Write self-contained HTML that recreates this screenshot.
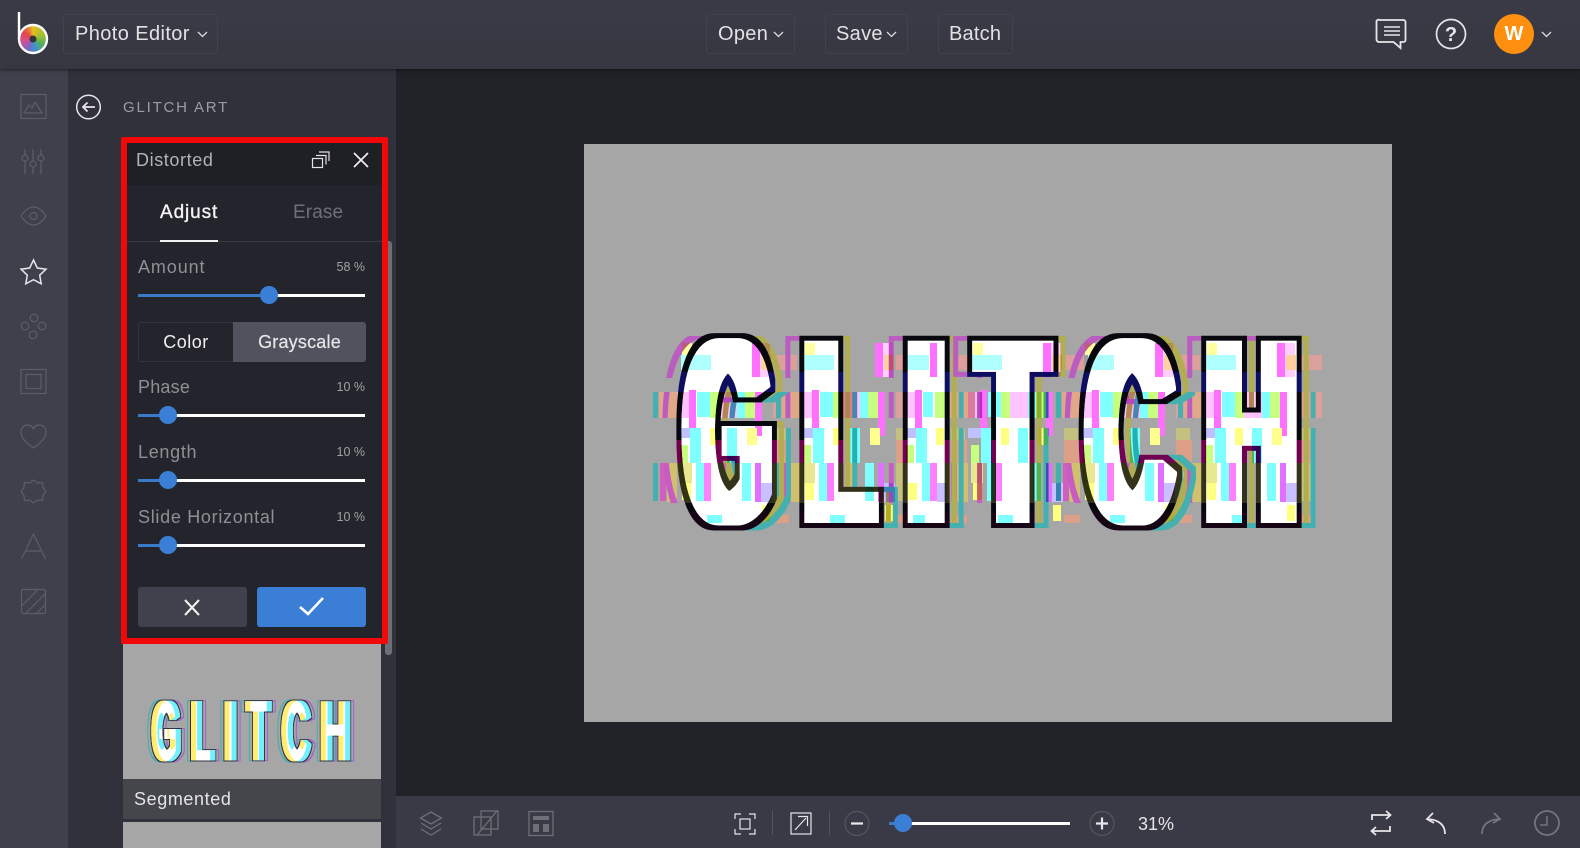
<!DOCTYPE html>
<html><head><meta charset="utf-8"><title>Photo Editor</title>
<style>
html,body{margin:0;padding:0;background:#202227;}
body{position:relative;width:1580px;height:848px;overflow:hidden;font-family:"Liberation Sans",sans-serif;}
.a{position:absolute;}
.t{position:absolute;white-space:nowrap;line-height:24px;height:24px;letter-spacing:.7px;}
.btn{position:absolute;top:14px;height:38px;border:1px solid #41424c;border-radius:3px;box-sizing:content-box;}
.track{position:absolute;left:138px;width:227px;height:3px;background:#fff;}
.fill{position:absolute;left:0;top:0;height:3px;background:#3a7bc8;}
.knob{position:absolute;width:18px;height:18px;border-radius:50%;background:#3a7fd5;top:-8px;}
.pc{font-size:12.5px;color:#a0a1a6;letter-spacing:0;right:1215px;}
</style></head><body>
<div class="a" style="left:0;top:0;width:1580px;height:69px;background:linear-gradient(#3a3b46,#363741);z-index:3;box-shadow:0 1px 3px rgba(0,0,0,.5)"></div>
<div class="a" style="left:0;top:69px;width:68px;height:779px;background:#3e404b"></div>
<div class="a" style="left:68px;top:69px;width:328px;height:779px;background:#30313b"></div>
<div class="a" style="left:396px;top:69px;width:1184px;height:727px;background:#202227"></div>
<div class="a" style="left:396px;top:796px;width:1184px;height:52px;background:#393a45"></div>
<div class="a" style="left:584px;top:144px;width:808px;height:578px;background:#a6a6a6"></div>

<div class="a" style="left:123px;top:644px;width:258px;height:136px;background:#a6a6a6"></div>
<div class="a" style="left:123px;top:779px;width:258px;height:40px;background:#45464c"></div>
<div class="a" style="left:123px;top:822px;width:258px;height:26px;background:#a6a6a6"></div>
<div class="t" style="left:134px;top:787px;font-size:18px;color:#e4e4e6;letter-spacing:.6px">Segmented</div>

<div class="a" style="left:385px;top:241px;width:7px;height:414px;background:#6d6e76;border-radius:3px"></div>

<div class="a" style="left:127px;top:143px;width:255px;height:495px;background:#24252c"></div>
<div class="a" style="left:127px;top:143px;width:255px;height:42px;background:#1f2025"></div>
<div class="a" style="left:127px;top:241px;width:255px;height:1px;background:#3a3b44"></div>
<div class="a" style="left:160px;top:240px;width:58px;height:2px;background:#f0f0f0"></div>
<div class="a" style="left:121px;top:137px;width:267px;height:507px;border:6px solid #f20808;box-sizing:border-box;border-radius:2px;z-index:2"></div>

<!-- header text -->
<div class="btn" style="left:63px;width:153px;z-index:4"></div>
<div class="t" style="left:75px;top:22px;font-size:20px;color:#e2e2e5;z-index:4;letter-spacing:.4px">Photo Editor</div>
<div class="btn" style="left:706px;width:87px;z-index:4"></div>
<div class="t" style="left:718px;top:22px;font-size:20px;color:#e2e2e5;z-index:4;letter-spacing:.3px">Open</div>
<div class="btn" style="left:825px;width:81px;z-index:4"></div>
<div class="t" style="left:836px;top:22px;font-size:20px;color:#e2e2e5;z-index:4;letter-spacing:.3px">Save</div>
<div class="btn" style="left:938px;width:73px;z-index:4"></div>
<div class="t" style="left:949px;top:22px;font-size:20px;color:#e2e2e5;z-index:4;letter-spacing:.2px">Batch</div>
<div class="a" style="left:1494px;top:14px;width:40px;height:40px;border-radius:50%;background:#ff900f;z-index:4;color:#fff;font-weight:bold;font-size:20px;line-height:41px;text-align:center">W</div>

<!-- logo wheel -->
<div class="a" style="left:20px;top:26px;width:26px;height:26px;border-radius:50%;background:conic-gradient(#e8c020 0deg,#9cc030 70deg,#50b060 120deg,#3f90d0 170deg,#8a5fc0 215deg,#d84f90 260deg,#e04848 310deg,#e89030 345deg,#e8c020 360deg);z-index:4"></div>

<!-- panel text -->
<div class="t" style="left:123px;top:96px;font-size:15px;color:#9c9da4;letter-spacing:1.8px">GLITCH ART</div>
<div class="t" style="left:136px;top:148px;font-size:18px;color:#b2b3b7;z-index:3;letter-spacing:.6px">Distorted</div>
<div class="t" style="left:160px;top:201px;font-size:19px;color:#f4f4f4;letter-spacing:.9px;-webkit-text-stroke:.35px #f4f4f4">Adjust</div>
<div class="t" style="left:293px;top:201px;font-size:19px;color:#6e6f78;letter-spacing:.1px">Erase</div>

<div class="t" style="left:138px;top:255px;font-size:18px;color:#8f9096;letter-spacing:.9px">Amount</div>
<div class="t pc" style="top:255px">58 %</div>
<div class="track" style="top:294px"><div class="fill" style="width:131px"></div><div class="knob" style="left:122px"></div></div>

<div class="a" style="left:138px;top:322px;width:95px;height:40px;border:1px solid #33343d;border-right:0;box-sizing:border-box;border-radius:3px 0 0 3px;color:#f0f0f0;font-size:18px;line-height:38px;text-align:center;letter-spacing:.5px">Color</div>
<div class="a" style="left:233px;top:322px;width:133px;height:40px;background:#50525e;border-radius:0 3px 3px 0;color:#e6e6e8;font-size:18px;line-height:40px;text-align:center;letter-spacing:.2px;-webkit-text-stroke:.2px #e6e6e8">Grayscale</div>

<div class="t" style="left:138px;top:375px;font-size:18px;color:#8f9096;letter-spacing:.2px">Phase</div>
<div class="t pc" style="top:375px">10 %</div>
<div class="track" style="top:414px"><div class="fill" style="width:30px"></div><div class="knob" style="left:21px"></div></div>

<div class="t" style="left:138px;top:440px;font-size:18px;color:#8f9096">Length</div>
<div class="t pc" style="top:440px">10 %</div>
<div class="track" style="top:479px"><div class="fill" style="width:30px"></div><div class="knob" style="left:21px"></div></div>

<div class="t" style="left:138px;top:505px;font-size:18px;color:#8f9096">Slide Horizontal</div>
<div class="t pc" style="top:505px">10 %</div>
<div class="track" style="top:544px"><div class="fill" style="width:30px"></div><div class="knob" style="left:21px"></div></div>

<div class="a" style="left:138px;top:587px;width:109px;height:40px;background:#3f414c;border-radius:3px"></div>
<div class="a" style="left:257px;top:587px;width:109px;height:40px;background:#3a7fd5;border-radius:3px"></div>

<!-- bottom slider -->
<div class="a" style="left:889px;top:822px;width:181px;height:3px;background:#fff"></div>
<div class="a" style="left:889px;top:822px;width:13px;height:3px;background:#3a7bc8"></div>
<div class="a" style="left:894px;top:814px;width:18px;height:18px;border-radius:50%;background:#3a7fd5"></div>
<div class="t" style="left:1138px;top:812px;font-size:18px;color:#e6e6e8;letter-spacing:0">31%</div>

<!-- icons + artwork -->
<svg class="a" style="left:0;top:0;z-index:5;pointer-events:none" width="1580" height="848" viewBox="0 0 1580 848" fill="none">
<defs>
<filter id="gl" filterUnits="userSpaceOnUse" x="620" y="310" width="740" height="240" primitiveUnits="userSpaceOnUse" color-interpolation-filters="sRGB">
  <feMorphology in="SourceAlpha" operator="dilate" radius="9 1" result="core"/>
  <feMorphology in="SourceAlpha" operator="dilate" radius="14 6" result="outer"/>
  <feComposite in="outer" in2="core" operator="out" result="ring"/>
  <feOffset in="ring" dx="-14" dy="0" result="rm"/>
  <feOffset in="ring" dx="14" dy="0" result="rt"/>
  <feOffset in="ring" dx="7" dy="0" result="ry"/>
  <feFlood x="620" y="336" width="740" height="42" flood-color="#bb5cc0" result="m1"/>
  <feFlood x="620" y="392" width="740" height="26" flood-color="#bb5cc0" result="m2"/>
  <feFlood x="620" y="463" width="740" height="40" flood-color="#c95cc0" result="m3"/>
  <feMerge result="mb"><feMergeNode in="m1"/><feMergeNode in="m2"/><feMergeNode in="m3"/></feMerge>
  <feComposite in="mb" in2="rm" operator="in" result="mg"/>
  <feFlood x="620" y="392" width="740" height="26" flood-color="#45b0b0" result="t1"/>
  <feFlood x="620" y="428" width="740" height="105" flood-color="#45b0b0" result="t2"/>
  <feMerge result="tb"><feMergeNode in="t1"/><feMergeNode in="t2"/></feMerge>
  <feComposite in="tb" in2="rt" operator="in" result="tl"/>
  <feFlood x="620" y="336" width="740" height="200" flood-color="#b0ae50" result="y1"/>
  <feComposite in="y1" in2="ry" operator="in" result="yl"/>
  <feFlood flood-color="#08080f" result="bk0"/>
  <feFlood x="620" y="372" width="740" height="20" flood-color="#0e0e60" result="bk1"/>
  <feFlood x="620" y="440" width="740" height="23" flood-color="#700050" result="bk2"/>
  <feFlood x="620" y="463" width="740" height="40" flood-color="#33331c" result="bk3"/>
  <feFlood x="620" y="512" width="740" height="22" flood-color="#150515" result="bk4"/>
  <feMerge result="bk"><feMergeNode in="bk0"/><feMergeNode in="bk1"/><feMergeNode in="bk2"/><feMergeNode in="bk3"/><feMergeNode in="bk4"/></feMerge>
  <feComposite in="bk" in2="ring" operator="in" result="bl"/>
  <feFlood flood-color="#ffffff" result="wh"/>
  <feComposite in="wh" in2="core" operator="in" result="wl"/>
  <feMerge>
    <feMergeNode in="yl"/><feMergeNode in="mg"/><feMergeNode in="tl"/><feMergeNode in="bl"/><feMergeNode in="wl"/>
  </feMerge>
</filter>
<filter id="gs" filterUnits="userSpaceOnUse" x="620" y="310" width="740" height="240" primitiveUnits="userSpaceOnUse" color-interpolation-filters="sRGB">
  <feMorphology in="SourceAlpha" operator="dilate" radius="9 1" result="core"/>
  <feMorphology in="SourceAlpha" operator="dilate" radius="12 4" result="outer"/>
  <feComposite in="outer" in2="core" operator="out" result="ring"/>
  <feOffset in="ring" dx="-9" result="r1"/>
  <feOffset in="ring" dx="9" result="r2"/>
  <feOffset in="core" dx="15" result="c1"/>
  <feOffset in="core" dx="-15" result="c2"/>
  <feFlood flood-color="#40b0b0" result="f1"/><feComposite in="f1" in2="r1" operator="in" result="l1"/>
  <feFlood flood-color="#a060d0" result="f2"/><feComposite in="f2" in2="r2" operator="in" result="l2"/>
  <feFlood flood-color="#33333f" result="f3"/><feComposite in="f3" in2="ring" operator="in" result="l3"/>
  <feFlood flood-color="#ffffff" result="f4"/><feComposite in="f4" in2="core" operator="in" result="l4"/>
  <feFlood flood-color="#ffee70" result="f5"/><feComposite in="f5" in2="core" operator="in" result="l5a"/><feComposite in="l5a" in2="c1" operator="out" result="l5"/>
  <feFlood flood-color="#70f0ff" result="f6"/><feComposite in="f6" in2="core" operator="in" result="l6a"/><feComposite in="l6a" in2="c2" operator="out" result="l6"/>
  <feMerge><feMergeNode in="l1"/><feMergeNode in="l2"/><feMergeNode in="l3"/><feMergeNode in="l4"/><feMergeNode in="l5"/><feMergeNode in="l6"/></feMerge>
</filter>
<g id="back">
  <rect x="96" y="355" width="24" height="15" fill="#dca09c"/>
  <rect x="-18" y="392" width="18" height="26" fill="#e0a888"/>
  <rect x="-24" y="392" width="5" height="26" fill="#45b0b0"/>
  <rect x="96" y="392" width="24" height="26" fill="#dca09c"/>
  <rect x="96" y="440" width="16" height="23" fill="#dca088"/>
  <rect x="96" y="428" width="14" height="12" fill="#c4c080"/>
  <rect x="-24" y="463" width="5" height="38" fill="#45b0b0"/>
  <rect x="-17" y="463" width="6" height="38" fill="#d060c0"/>
  <rect x="-10" y="463" width="10" height="39" fill="#d0c070"/>
  <rect x="96" y="463" width="14" height="38" fill="#c8c080"/>
  <rect x="96" y="515" width="16" height="8" fill="#dca088"/>
</g>
<g id="front" style="mix-blend-mode:multiply">
  <rect x="0" y="392" width="12" height="26" fill="#ffc4ff"/>
  <rect x="12" y="390" width="7" height="47" fill="#ff70ff"/>
  <rect x="20" y="392" width="13" height="25" fill="#80ffff"/>
  <rect x="33" y="392" width="9" height="26" fill="#c8ff80"/>
  <rect x="42" y="392" width="18" height="26" fill="#ffc4ff"/>
  <rect x="60" y="392" width="8" height="26" fill="#80ffff"/>
  <rect x="78" y="392" width="7" height="44" fill="#ff70ff"/>
  <rect x="68" y="392" width="10" height="26" fill="#c8ff80"/>
  <rect x="75" y="343" width="8" height="34" fill="#ff70ff"/>
  <rect x="83" y="343" width="10" height="34" fill="#ffd0ff"/>
  <rect x="5" y="343" width="10" height="12" fill="#ffffa0"/>
  <rect x="4" y="355" width="30" height="15" fill="#b0ffff"/>
  <rect x="84" y="355" width="10" height="15" fill="#ffd0a0"/>
  <rect x="0" y="428" width="13" height="10" fill="#c0c0ff"/>
  <rect x="13" y="428" width="11" height="35" fill="#80ffff"/>
  <rect x="33" y="428" width="8" height="17" fill="#ffff80"/>
  <rect x="3" y="445" width="8" height="18" fill="#c8ff80"/>
  <rect x="70" y="428" width="10" height="17" fill="#ffff90"/>
  <rect x="50" y="428" width="10" height="35" fill="#80ffff"/>
  <rect x="3" y="463" width="12" height="20" fill="#e8e890"/>
  <rect x="5" y="483" width="9" height="17" fill="#ffff80"/>
  <rect x="19" y="463" width="8" height="38" fill="#80ffff"/>
  <rect x="27" y="463" width="7" height="38" fill="#ff80ff"/>
  <rect x="78" y="463" width="6" height="39" fill="#e070ff"/>
  <rect x="84" y="483" width="11" height="19" fill="#c8c0ff"/>
  <rect x="65" y="463" width="9" height="38" fill="#80ffff"/>
  <rect x="30" y="515" width="15" height="8" fill="#80ffff"/>
  <rect x="85" y="505" width="8" height="16" fill="#ffff80"/>
</g>
<g id="frontI" style="mix-blend-mode:multiply">
  <rect x="0" y="392" width="12" height="26" fill="#ffc4ff"/>
  <rect x="12" y="390" width="7" height="47" fill="#ff70ff"/>
  <rect x="20" y="392" width="10" height="25" fill="#80ffff"/>
  <rect x="32" y="392" width="13" height="26" fill="#c8ff80"/>
  <rect x="27" y="343" width="7" height="34" fill="#ff70ff"/>
  <rect x="4" y="355" width="22" height="15" fill="#b0ffff"/>
  <rect x="0" y="428" width="13" height="10" fill="#c0c0ff"/>
  <rect x="13" y="428" width="11" height="35" fill="#80ffff"/>
  <rect x="33" y="428" width="8" height="17" fill="#ffff80"/>
  <rect x="3" y="445" width="8" height="18" fill="#c8ff80"/>
  <rect x="5" y="483" width="9" height="17" fill="#ffff80"/>
  <rect x="19" y="463" width="8" height="38" fill="#80ffff"/>
  <rect x="27" y="463" width="7" height="38" fill="#ff80ff"/>
  <rect x="34" y="483" width="10" height="19" fill="#c8c0ff"/>
  <rect x="10" y="515" width="12" height="8" fill="#80ffff"/>
</g>
</defs>

<!-- main artwork -->
<use href="#back" x="677"/><use href="#back" x="800"/><use href="#back" x="855"/><use href="#back" x="968"/><use href="#back" x="1080"/><use href="#back" x="1202"/>
<g filter="url(#gl)" font-family="'Liberation Sans',sans-serif" font-weight="bold" font-size="262" fill="#000">
  <text transform="translate(686,522) scale(.41,1)">G</text>
  <text transform="translate(806,522) scale(.42,1)">L</text>
  <text transform="translate(908,522) scale(.5,1)">I</text>
  <text transform="translate(980,522) scale(.41,1)">T</text>
  <text transform="translate(1088,522) scale(.44,1)">C</text>
  <text transform="translate(1207,522) scale(.47,1)">H</text>
</g>
<use href="#front" x="677"/><use href="#front" x="800"/><use href="#frontI" x="903"/><use href="#front" x="968"/><use href="#front" x="1080"/><use href="#front" x="1202"/>

<!-- thumbnail -->
<g transform="translate(-68.7,591.5) scale(.323)">
<g filter="url(#gs)" font-family="'Liberation Sans',sans-serif" font-weight="bold" font-size="262" fill="#000">
  <text transform="translate(686,522) scale(.41,1)">G</text>
  <text transform="translate(806,522) scale(.42,1)">L</text>
  <text transform="translate(908,522) scale(.5,1)">I</text>
  <text transform="translate(980,522) scale(.41,1)">T</text>
  <text transform="translate(1088,522) scale(.44,1)">C</text>
  <text transform="translate(1207,522) scale(.47,1)">H</text>
</g></g>

<!-- logo -->
<path d="M19 12V39" stroke="#fff" stroke-width="2.4"/>
<circle cx="33" cy="39" r="14" stroke="#fff" stroke-width="2.4"/>
<circle cx="33" cy="39" r="3.5" fill="#34343e"/>

<!-- header chevrons -->
<g stroke="#dcdce0" stroke-width="1.3">
<path d="M198 32l4.500 4.500 4.500-4.500"/><path d="M774 32l4.500 4.500 4.500-4.500"/><path d="M887 32l4.500 4.500 4.500-4.500"/><path d="M1542 32l4.500 4.500 4.500-4.500"/>
</g>
<!-- chat -->
<path d="M1379.500 20h24a2 2 0 0 1 2 2v18a2 2 0 0 1-2 2h-3v6l-7-6h-14a3 3 0 0 1-3-2V22a2 2 0 0 1 3-2z" stroke="#e6e6ea" stroke-width="1.8"/>
<path d="M1384 27h16M1384 31h16M1384 35h16" stroke="#e6e6ea" stroke-width="1.4"/>
<!-- help -->
<circle cx="1451" cy="34" r="14.500" stroke="#e6e6ea" stroke-width="1.7"/>
<text x="1451" y="41" text-anchor="middle" font-family="'Liberation Sans',sans-serif" font-weight="bold" font-size="20" fill="#e6e6ea">?</text>

<!-- sidebar -->
<g stroke="#5c5d67" stroke-width="1.2">
<rect x="21" y="94.500" width="25" height="24"/>
<path d="M24 113l5-8 3 3 3-6 7 11z"/>
<path d="M25 149v25M33 149v25M41 149v25"/>
<circle cx="25" cy="158" r="3" fill="#3e404b"/><circle cx="33" cy="164" r="3" fill="#3e404b"/><circle cx="41" cy="158" r="3" fill="#3e404b"/>
<path d="M21 216c4-6 8-9 12.500-9s8.500 3 12.500 9c-4 6-8 9-12.500 9s-8.500-3-12.500-9z"/><circle cx="33.500" cy="216" r="3.500"/>
<circle cx="34" cy="318" r="3.800"/><circle cx="25" cy="326" r="3.800"/><circle cx="42" cy="326" r="3.800"/><circle cx="33" cy="335" r="3.800"/>
<rect x="21" y="369.500" width="25" height="24"/><rect x="26" y="374.500" width="15" height="14"/>
<path d="M33.500 448c-7-5-12.500-10-12.500-16 0-4 3-7 6.500-7 3 0 5 1.500 6 4 1-2.500 3-4 6-4 3.500 0 6.500 3 6.500 7 0 6-5.500 11-12.500 16z"/>
<path d="M33.500 480l4 3 5-.5 .5 5 3 4-3 4-.5 5-5-.5-4 3-4-3-5 .5-.5-5-3-4 3-4 .5-5 5 .5z"/>
<path d="M21.500 559l12-25 12 25M26 551h15"/>
<rect x="21.500" y="589.500" width="24" height="24" rx="2"/>
<path d="M21.500 606l17-17M26 613l19-19M37 613l8-8"/>
</g>
<path d="M33.500 260l3.800 8 8.700 1.200-6.300 6 1.500 8.600-7.700-4.100-7.700 4.100 1.500-8.600-6.300-6 8.700-1.200z" stroke="#e6e6ea" stroke-width="1.5"/>

<!-- back -->
<circle cx="88.500" cy="107" r="11.800" stroke="#e6e6ea" stroke-width="1.500"/>
<path d="M95 107H83M87.500 102.500L83 107l4.500 4.500" stroke="#e6e6ea" stroke-width="1.800"/>

<!-- panel head icons -->
<g stroke="#e4e4e6" stroke-width="1.200">
<rect x="312.500" y="158.500" width="10" height="9"/>
<path d="M316 155.500h10v9M319 152h10v9"/>
</g>
<path d="M354 153l14 14M368 153l-14 14" stroke="#f0f0f0" stroke-width="1.700"/>
<path d="M185 600l14 15M199 600l-14 15" stroke="#f0f0f0" stroke-width="2.100"/>
<path d="M300 607l8 7 15-16" stroke="#fff" stroke-width="2.600"/>

<!-- bottom left icons -->
<g stroke="#6e6f77" stroke-width="1.300">
<path d="M431 812l10.500 6-10.500 6-10.500-6z"/><path d="M421 823l10 6 10-6M421 829l10 6 10-6"/>
<rect x="474" y="817" width="17" height="18"/><rect x="481" y="811" width="17" height="18"/><path d="M477 835l20-24"/>
<rect x="529" y="811.500" width="24" height="24"/>
</g>
<rect x="533" y="816" width="16" height="4" fill="#6e6f77"/><rect x="533" y="824" width="6" height="8" fill="#6e6f77"/><rect x="543" y="824" width="6" height="8" fill="#6e6f77"/>
<!-- fit -->
<g stroke="#e6e6ea" stroke-width="1.200">
<path d="M735 819v-5h6M749 814h6v5M755 829v5h-6M741 834h-6v-5"/>
<rect x="740" y="819" width="10" height="10"/>
<rect x="791" y="813" width="20" height="21"/>
<path d="M795 830l11-12M798 816.500h9.500v9.500"/>
</g>
<path d="M772.500 811v24M829.500 811v24" stroke="#53545e" stroke-width="1"/>
<circle cx="857" cy="823.500" r="12" stroke="#555660" stroke-width="1.200"/>
<circle cx="1102" cy="823.500" r="12" stroke="#555660" stroke-width="1.200"/>
<path d="M851 823.500h12M1096 823.500h12M1102 817.500v12" stroke="#e6e6ea" stroke-width="2.200"/>
<!-- right icons -->
<g stroke="#e6e6ea" stroke-width="1.800">
<path d="M1372 820v-5h18M1386 811l4.500 4-4.500 4"/>
<path d="M1390 826v5h-18M1376 827l-4.500 4 4.500 4"/>
<path d="M1445 834c0-9-6-14-17-15M1433 813l-6 6 7 4"/>
</g>
<g stroke="#73747c" stroke-width="1.800">
<path d="M1482 834c0-9 6-14 17-15M1494 813l6 6-7 4"/>
<circle cx="1547" cy="823" r="12"/>
<path d="M1547 816v9h-7" stroke-width="1.500"/>
</g>
</svg>
</body></html>
